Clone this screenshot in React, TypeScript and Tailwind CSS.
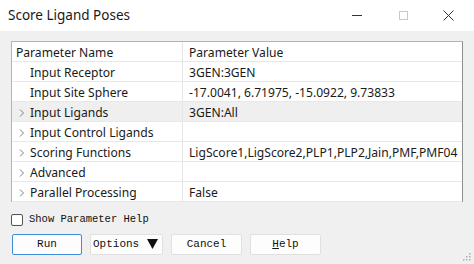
import React from "react";

const rows: { name: string; value: string; exp: boolean; sel?: boolean }[] = [
  { name: "Input Receptor", value: "3GEN:3GEN", exp: false },
  { name: "Input Site Sphere", value: "-17.0041, 6.71975, -15.0922, 9.73833", exp: false },
  { name: "Input Ligands", value: "3GEN:All", exp: true, sel: true },
  { name: "Input Control Ligands", value: "", exp: true },
  { name: "Scoring Functions", value: "LigScore1,LigScore2,PLP1,PLP2,Jain,PMF,PMF04", exp: true },
  { name: "Advanced", value: "", exp: true },
  { name: "Parallel Processing", value: "False", exp: true },
];

const ui = { fontFamily: '"Noto Sans", "Open Sans", sans-serif' };
const mono = { fontFamily: '"Liberation Mono", "DejaVu Sans Mono", monospace' };

function Chevron() {
  return (
    <svg width="6" height="8" viewBox="0 0 6 8" className="block">
      <path d="M1 0.5 L4.5 4 L1 7.5" fill="none" stroke="#808080" strokeWidth="1" />
    </svg>
  );
}

function Btn({ children, focus, w }: { children: React.ReactNode; focus?: boolean; w: string }) {
  return (
    <div
      className={`${w} h-[21px] flex items-center justify-center rounded-[2px] bg-[#fdfdfd] text-[11px] text-[#111] border ${
        focus ? "border-[#3c8ddb]" : "border-[#e0e0e0]"
      }`}
      style={mono}
    >
      {children}
    </div>
  );
}

export default function App() {
  return (
    <div className="relative w-[474px] h-[264px] bg-[#f0f0f0] flex flex-col overflow-hidden" style={ui}>
      <div className="h-[31px] bg-white flex items-center shrink-0">
        <span className="ml-[8px] text-[13.5px] text-[#1a1a1a]">Score Ligand Poses</span>
        <div className="ml-auto flex items-center h-full">
          <div className="w-[46px] h-full flex items-center justify-center">
            <div className="w-[10px] h-[1px] bg-[#333]" />
          </div>
          <div className="w-[46px] h-full flex items-center justify-center">
            <div className="w-[9px] h-[9px] border border-[#c8c8c8]" />
          </div>
          <div className="w-[44px] h-full flex items-center justify-center">
            <svg width="11" height="11" viewBox="0 0 11 11">
              <path d="M0.5 0.5 L10.5 10.5 M10.5 0.5 L0.5 10.5" stroke="#333" strokeWidth="1" />
            </svg>
          </div>
          <div className="w-[4px]" />
        </div>
      </div>
      <div className="px-[11px] pt-[10px]">
        <div className="bg-white border border-[#b4b4b4] border-r-[#8e8e8e] h-[161px] flex flex-col text-[12.1px] text-[#1a1a1a]">
          <div className="h-[20px] flex items-center border-b border-[#e8e8e8]">
            <div className="w-[171px] pl-[4px] pt-[3px] border-r border-[#e6e6e6] h-full flex items-center">Parameter Name</div>
            <div className="pl-[6px] pt-[3px]">Parameter Value</div>
          </div>
          {rows.map((r) => (
            <div
              key={r.name}
              className={`h-[20px] flex items-center border-b border-[#e8e8e8] ${r.sel ? "bg-[#efefef]" : ""}`}
            >
              <div className="w-[171px] h-full flex items-center border-r border-[#e6e6e6]">
                <div className="w-[18px] flex justify-center pl-[2px] pt-[2px]">{r.exp ? <Chevron /> : null}</div>
                <span className="pt-[3px]">{r.name}</span>
              </div>
              <div className="pl-[6px] pt-[3px] whitespace-nowrap">{r.value}</div>
            </div>
          ))}
        </div>
      </div>
      <div className="flex items-center px-[11px] mt-[10px] gap-[6px]">
        <div className="w-[12px] h-[12px] border border-[#555] rounded-[2px] bg-white" />
        <span className="text-[10.5px] text-[#111]" style={mono}>Show Parameter Help</span>
      </div>
      <div className="flex items-center pl-[12px] mt-[6px] gap-[8px]">
        <Btn w="w-[70px]" focus>Run</Btn>
        <Btn w="w-[73px]">
          <span className="w-full flex items-center justify-between px-[2px]">
            <span>Options</span>
            <svg width="11" height="10" viewBox="0 0 11 10" className="mr-[2px]">
              <path d="M0 0 H11 L5.5 10 Z" fill="#111" />
            </svg>
          </span>
        </Btn>
        <Btn w="w-[71px]">Cancel</Btn>
        <Btn w="w-[71px]">
          <span><span className="underline">H</span>elp</span>
        </Btn>
      </div>
      <svg width="8" height="8" viewBox="0 0 8 8" className="absolute right-[3px] bottom-[3px]">
        <rect x="6" y="0" width="1.5" height="1.5" fill="#b0b0b0" />
        <rect x="3" y="3" width="1.5" height="1.5" fill="#b0b0b0" />
        <rect x="6" y="3" width="1.5" height="1.5" fill="#b0b0b0" />
        <rect x="0" y="6" width="1.5" height="1.5" fill="#b0b0b0" />
        <rect x="3" y="6" width="1.5" height="1.5" fill="#b0b0b0" />
        <rect x="6" y="6" width="1.5" height="1.5" fill="#b0b0b0" />
      </svg>
    </div>
  );
}
